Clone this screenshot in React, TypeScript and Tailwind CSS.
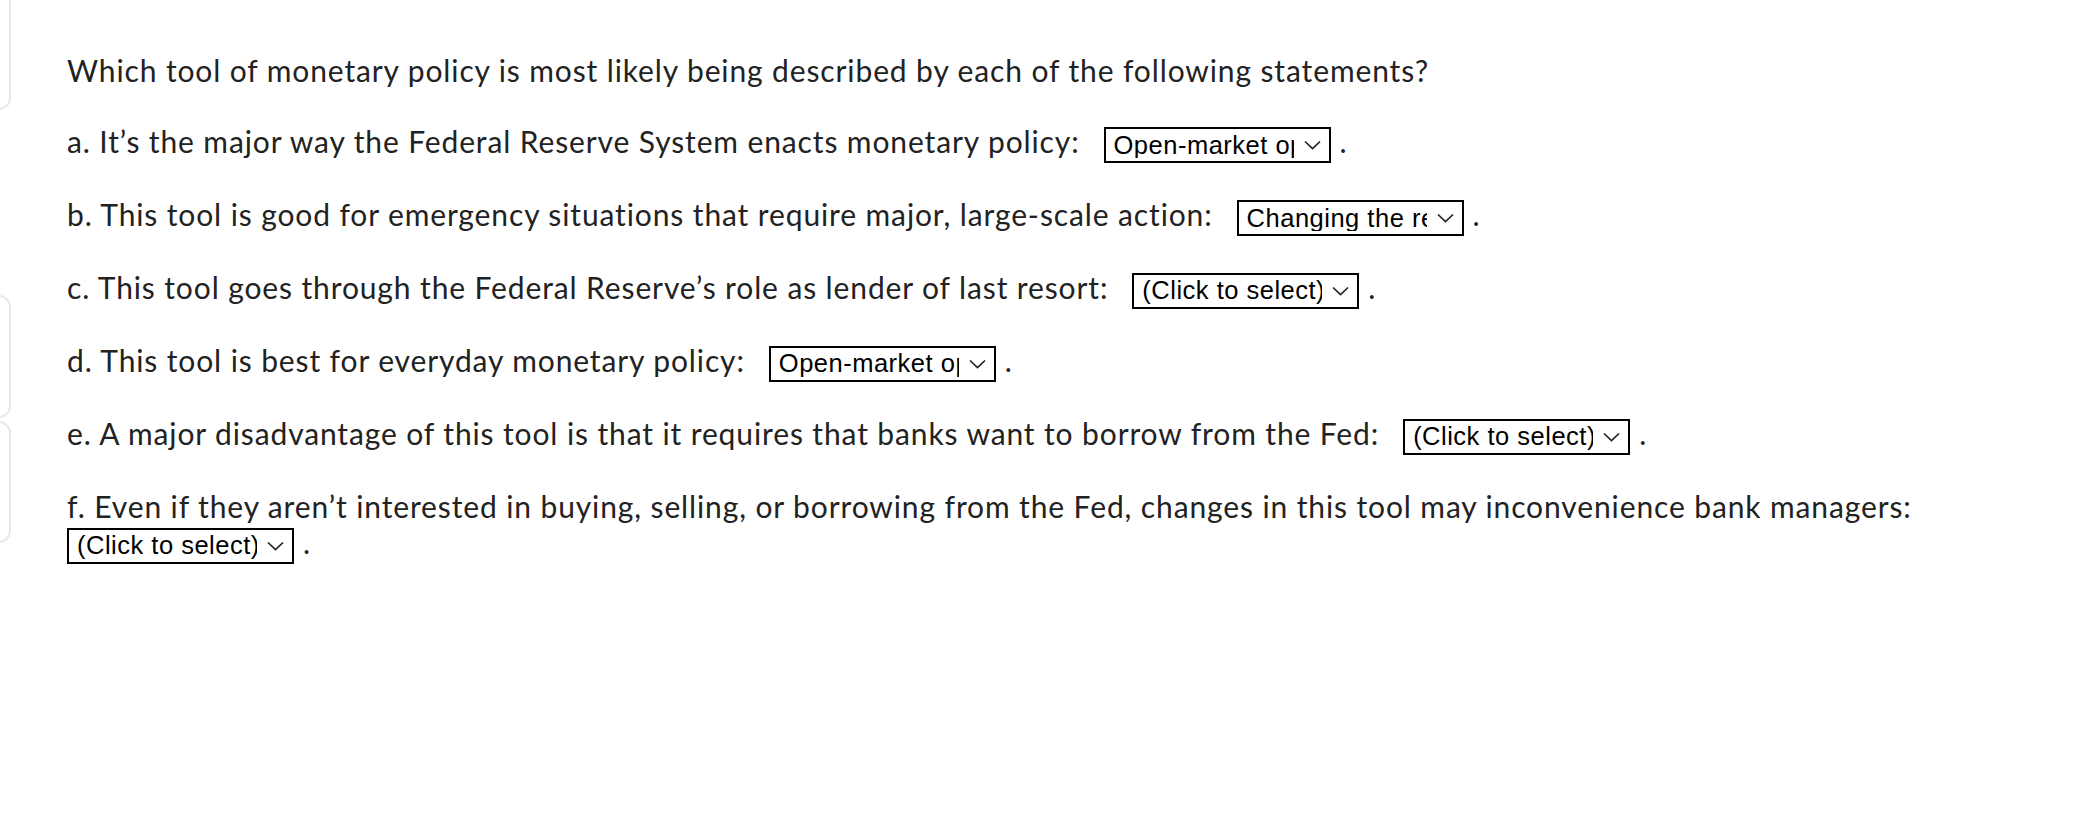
import React from "react";

const Chevron = () => (
  <svg width="17" height="10" viewBox="0 0 17 10" fill="none" className="block">
    <path d="M1 1.5 L8.5 8.5 L16 1.5" stroke="#222" strokeWidth="1.7" />
  </svg>
);

function Dropdown({ value, className = "" }: { value: string; className?: string }) {
  return (
    <span
      className={
        "inline-flex h-[36px] w-[227px] items-center border-2 border-black bg-white pl-[8px] pr-[8px] align-middle font-['Liberation_Sans',Arial,sans-serif] text-[25.5px] leading-none tracking-[0.5px] text-black " +
        className
      }
    >
      <span className="w-[180px] overflow-hidden whitespace-nowrap">{value}</span>
      <span className="ml-auto">
        <Chevron />
      </span>
    </span>
  );
}

const Dot = () => <span className="ml-[9px]">.</span>;

export default function App() {
  return (
    <div className="flex min-h-[834px] w-full bg-white">
      {/* cut-off sidebar cards on the left edge */}
      <div className="w-[11px] shrink-0 overflow-hidden">
        <div className="-ml-[209px] -mt-[20px] h-[130px] w-[220px] rounded-[12px] border-2 border-[#e8e8e8]" />
        <div className="-ml-[209px] mt-[185px] h-[123px] w-[220px] rounded-[12px] border-2 border-[#e8e8e8]" />
        <div className="-ml-[209px] mt-[3px] h-[122px] w-[220px] rounded-[12px] border-2 border-[#e8e8e8]" />
      </div>

      <div className="flex-1 pl-[56px] pr-[60px] pt-[52px] font-['Lato','Noto_Sans',sans-serif] text-[30px] leading-[36px] tracking-[0.88px] text-[#222]">
        <p className="mb-[35px]">
          Which tool of monetary policy is most likely being described by each of the following statements?
        </p>
        <p className="mb-[32.5px]">
          a. It’s the major way the Federal Reserve System enacts monetary policy:
          <Dropdown value="Open-market operations" className="ml-[24px]" />
          <Dot />
        </p>
        <p className="mb-[32.5px]">
          b. This tool is good for emergency situations that require major, large-scale action:
          <Dropdown value="Changing the reserve requirement" className="ml-[24px]" />
          <Dot />
        </p>
        <p className="mb-[32.5px]">
          c. This tool goes through the Federal Reserve’s role as lender of last resort:
          <Dropdown value="(Click to select)" className="ml-[24px]" />
          <Dot />
        </p>
        <p className="mb-[32.5px]">
          d. This tool is best for everyday monetary policy:
          <Dropdown value="Open-market operations" className="ml-[24px]" />
          <Dot />
        </p>
        <p className="mb-[32.5px]">
          e. A major disadvantage of this tool is that it requires that banks want to borrow from the Fed:
          <Dropdown value="(Click to select)" className="ml-[24px]" />
          <Dot />
        </p>
        <p className="mb-[32.5px]">
          f. Even if they aren’t interested in buying, selling, or borrowing from the Fed, changes in this tool may
          inconvenience bank managers: <Dropdown value="(Click to select)" />
          <Dot />
        </p>
      </div>
    </div>
  );
}
